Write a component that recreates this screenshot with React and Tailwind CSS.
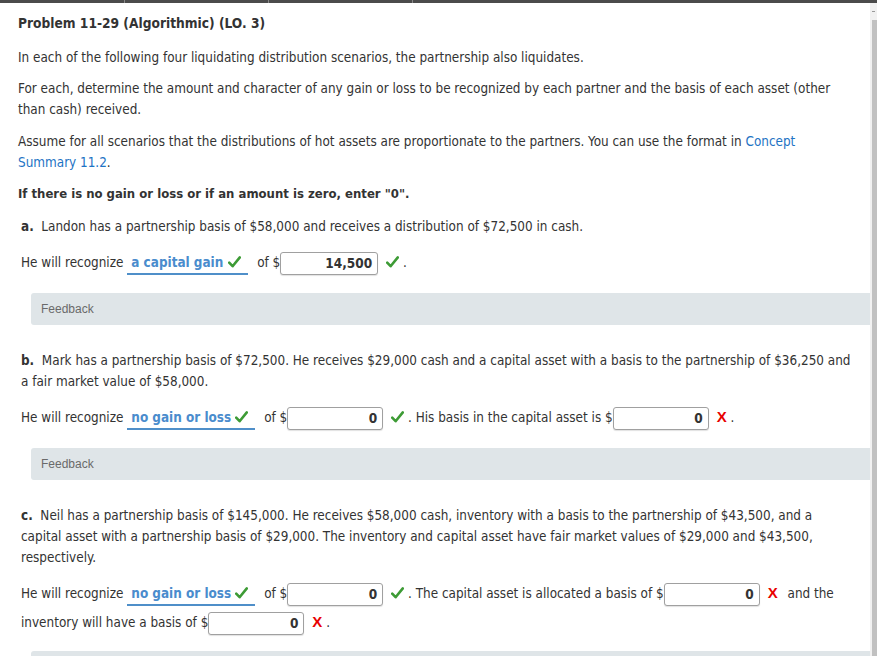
import React from "react";

const Check = () => (
  <svg width="13" height="12" viewBox="0 0 13 12" className="inline-block align-[-1px]">
    <path d="M1.2 6.6 L4.6 10.2 L11.8 1.4" fill="none" stroke="#3d9b35" strokeWidth="2.6" strokeLinecap="round" strokeLinejoin="round" />
  </svg>
);
const Cross = () => (
  <span className="inline-block text-[#e80000] font-bold text-[15px] leading-none" style={{ fontFamily: "'Liberation Sans', Arial, sans-serif" }}>X</span>
);

const Select = ({ text, w }) => (
  <span className={`inline-block border-b-2 border-[#4f8fc9] pl-[4px] pb-[1px] font-bold text-[#4a8ccd] leading-[18px] ${w}`}>
    {text} <Check />
  </span>
);

const Input = ({ value, w }) => (
  <span className={`inline-block h-[23px] align-middle rounded-[3px] border border-[#a0a0a0] shadow-[0_1px_1px_rgba(0,0,0,0.12)] bg-white text-right pr-[5px] font-bold text-[13.5px] text-[#333] leading-[21px] ${w}`}>
    {value}
  </span>
);

const Feedback = () => (
  <div className="ml-[31px] h-[32px] rounded-l-[3px] bg-[#dfe5e8] flex items-center pl-[10px] text-[12px] text-[#6a6a6a]" style={{ fontFamily: "'Liberation Sans', Arial, sans-serif" }}>
    Feedback
  </div>
);

export default function App() {
  return (
    <div className="w-[877px] h-[656px] overflow-hidden bg-white relative flex flex-col" style={{ fontFamily: "'DejaVu Sans Condensed', 'DejaVu Sans', sans-serif" }}>
      <div className="h-[3px] w-full bg-[#4b4b4b] flex shrink-0">
        <div className="w-[125px] border-r border-[#888]" />
        <div className="w-[144px] border-r border-[#888]" />
        <div className="w-[144px] border-r border-[#888]" />
      </div>
      <div className="flex flex-1 min-h-0">
        <div className="flex-1 min-w-0 text-[13.4px] text-[#333] leading-[21px]">
          <div className="pl-[18px] pr-[30px]">
            <div className="mt-[10px] font-bold text-[13.65px] text-[#333]">Problem 11-29 (Algorithmic) (LO. 3)</div>
            <p className="mt-[13px]">In each of the following four liquidating distribution scenarios, the partnership also liquidates.</p>
            <p className="mt-[10px]">For each, determine the amount and character of any gain or loss to be recognized by each partner and the basis of each asset (other than cash) received.</p>
            <p className="mt-[11px]">Assume for all scenarios that the distributions of hot assets are proportionate to the partners. You can use the format in <span className="text-[#1e73c4]">Concept Summary 11.2</span>.</p>
            <p className="mt-[10px] font-bold text-[13px]">If there is no gain or loss or if an amount is zero, enter "0".</p>
          </div>

          <div className="pl-[21px] pr-[8px]">
            <p className="mt-[12px]"><span className="font-bold">a.</span>&nbsp; Landon has a partnership basis of $58,000 and receives a distribution of $72,500 in cash.</p>
            <p className="mt-[14px] leading-[24px]">
              He will recognize <Select text="a capital gain" w="w-[121px]" /> <span className="ml-[5px]">of $</span><Input value="14,500" w="w-[98px]" />
              <span className="ml-[8px]"><Check /></span> .
            </p>
          </div>
          <div className="mt-[18px]"><Feedback /></div>

          <div className="pl-[21px] pr-[8px]">
            <p className="mt-[25px]"><span className="font-bold">b.</span>&nbsp; Mark has a partnership basis of $72,500. He receives $29,000 cash and a capital asset with a basis to the partnership of $36,250 and<br />a fair market value of $58,000.</p>
            <p className="mt-[14px] leading-[24px]">
              He will recognize <Select text="no gain or loss" w="w-[128px]" /> <span className="ml-[5px]">of $</span><Input value="0" w="w-[96px]" />
              <span className="ml-[8px]"><Check /></span> . His basis in the capital asset is $<Input value="0" w="w-[96px]" />
              <span className="ml-[8px]"><Cross /></span> .
            </p>
          </div>
          <div className="mt-[18px]"><Feedback /></div>

          <div className="pl-[21px] pr-[8px]">
            <p className="mt-[25px]"><span className="font-bold">c.</span>&nbsp; Neil has a partnership basis of $145,000. He receives $58,000 cash, inventory with a basis to the partnership of $43,500, and a<br />capital asset with a partnership basis of $29,000. The inventory and capital asset have fair market values of $29,000 and $43,500,<br />respectively.</p>
            <p className="mt-[11px] leading-[29px]">
              He will recognize <Select text="no gain or loss" w="w-[128px]" /> <span className="ml-[5px]">of $</span><Input value="0" w="w-[96px]" />
              <span className="ml-[8px]"><Check /></span> . The capital asset is allocated a basis of $<Input value="0" w="w-[96px]" />
              <span className="ml-[8px]"><Cross /></span> <span className="ml-[6px]">and the</span><br />
              inventory will have a basis of $<Input value="0" w="w-[96px]" />
              <span className="ml-[8px]"><Cross /></span> .
            </p>
          </div>
          <div className="mt-[14px]"><Feedback /></div>
        </div>
        <div className="w-[7px] shrink-0 bg-[#f1f1f1] flex flex-col">
          <div className="h-[17px] flex justify-center items-center"><div className="w-[3px] h-[1px] bg-[#999]" /></div>
          <div className="flex-1 ml-[2px] bg-[#c1c1c1]" />
        </div>
      </div>
    </div>
  );
}
